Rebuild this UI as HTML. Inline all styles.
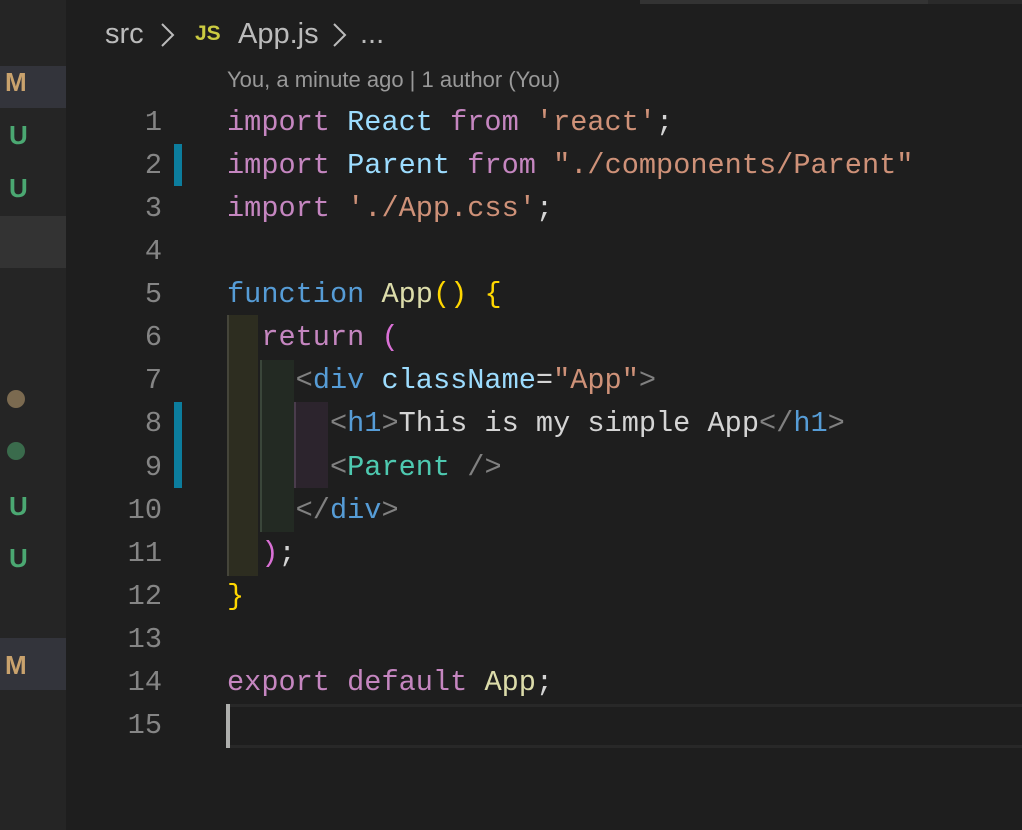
<!DOCTYPE html>
<html><head><meta charset="utf-8"><style>
html,body{margin:0;padding:0;width:1022px;height:830px;overflow:hidden;background:#1e1e1e;}
.abs{position:absolute}
#side{left:0;top:0;width:66px;height:830px;background:#252525}
.row{position:absolute;left:0;width:66px}
.st{position:absolute;font-family:"Liberation Sans",sans-serif;font-weight:bold;font-size:26px;left:7px}
.code{position:absolute;left:227px;font-family:"Liberation Mono",monospace;font-size:28.6px;white-space:pre;color:#d4d4d4;line-height:43px}
.ln{position:absolute;left:90px;width:72px;text-align:right;font-family:"Liberation Mono",monospace;font-size:28.6px;color:#858585;line-height:43px}
.k{color:#c586c0}.v{color:#9cdcfe}.s{color:#ce9178}.f{color:#569cd6}.fn{color:#dcdcaa}.b{color:#ffd700}.p{color:#da70d6}.t{color:#808080}.tn{color:#569cd6}.c{color:#4ec9b0}
.bc{position:absolute;font-family:'Liberation Sans',sans-serif;font-size:29px;color:#bbbbbb;white-space:pre;top:18px}
</style></head><body>
<div id="side" class="abs">
 <div class="row" style="top:66px;height:42px;background:#33343b"></div>
 <div class="row" style="top:216px;height:52px;background:#333333"></div>
 <div class="row" style="top:638px;height:52px;background:#33343b"></div>
 <div class="st" style="top:67px;color:#c9a26d;left:5px">M</div>
 <div class="st" style="top:120px;color:#4ba872;left:9px">U</div>
 <div class="st" style="top:173px;color:#4ba872;left:9px">U</div>
 <div class="abs" style="left:7px;top:390px;width:18px;height:18px;border-radius:50%;background:#7b6a50"></div>
 <div class="abs" style="left:7px;top:442px;width:18px;height:18px;border-radius:50%;background:#3a6b4c"></div>
 <div class="st" style="top:491px;color:#4ba872;left:9px">U</div>
 <div class="st" style="top:543px;color:#4ba872;left:9px">U</div>
 <div class="st" style="top:650px;color:#c9a26d;left:5px">M</div>
</div>
<div class="abs" style="left:640px;top:0;width:288px;height:4px;background:#333"></div>
<div class="abs" style="left:928px;top:0;width:94px;height:4px;background:#2a2a2a"></div>
<div class="bc" style="left:105px">src</div>
<svg class="abs" style="left:158px;top:22px" width="18" height="26" viewBox="0 0 18 26"><path d="M4 2 L15 13 L4 24" stroke="#bbbbbb" stroke-width="2" fill="none"/></svg>
<div class="abs" style="left:195px;top:22px;font-family:'Liberation Sans',sans-serif;font-weight:bold;font-size:21px;color:#cbcb41">JS</div>
<div class="bc" style="left:238px">App.js</div>
<svg class="abs" style="left:330px;top:22px" width="18" height="26" viewBox="0 0 18 26"><path d="M4 2 L15 13 L4 24" stroke="#bbbbbb" stroke-width="2" fill="none"/></svg>
<div class="bc" style="left:360px">...</div>
<div class="abs" style="left:227px;top:67px;font-family:'Liberation Sans',sans-serif;font-size:22px;color:#999999;white-space:pre">You, a minute ago | 1 author (You)</div>
<div class="abs" style="left:227px;top:315px;width:31px;height:261px;background:#2d2d20;border-left:2px solid #45453a;box-sizing:border-box"></div>
<div class="abs" style="left:260px;top:360px;width:34px;height:172px;background:#232a23;border-left:2px solid #3a463a;box-sizing:border-box"></div>
<div class="abs" style="left:294px;top:402px;width:34px;height:86px;background:#2c242d;border-left:2px solid #4a3c4c;box-sizing:border-box"></div>
<div class="abs" style="left:174px;top:144px;width:8px;height:42px;background:#0c7d9d"></div>
<div class="abs" style="left:174px;top:402px;width:8px;height:86px;background:#0c7d9d"></div>
<div class="abs" style="left:227px;top:704px;width:795px;height:44px;border-top:3px solid #282828;border-bottom:3px solid #282828;box-sizing:border-box"></div>
<div class="abs" style="left:226px;top:704px;width:4px;height:44px;background:#aeafad"></div>
<div class="ln" style="top:101px">1</div>
<div class="ln" style="top:144px">2</div>
<div class="ln" style="top:187px">3</div>
<div class="ln" style="top:230px">4</div>
<div class="ln" style="top:273px">5</div>
<div class="ln" style="top:316px">6</div>
<div class="ln" style="top:359px">7</div>
<div class="ln" style="top:402px">8</div>
<div class="ln" style="top:446px">9</div>
<div class="ln" style="top:489px">10</div>
<div class="ln" style="top:532px">11</div>
<div class="ln" style="top:575px">12</div>
<div class="ln" style="top:618px">13</div>
<div class="ln" style="top:661px">14</div>
<div class="ln" style="top:704px">15</div>
<div class="code" style="top:101px"><span class="k">import</span> <span class="v">React</span> <span class="k">from</span> <span class="s">'react'</span>;</div>
<div class="code" style="top:144px"><span class="k">import</span> <span class="v">Parent</span> <span class="k">from</span> <span class="s">"./components/Parent"</span></div>
<div class="code" style="top:187px"><span class="k">import</span> <span class="s">'./App.css'</span>;</div>
<div class="code" style="top:273px"><span class="f">function</span> <span class="fn">App</span><span class="b">()</span> <span class="b">{</span></div>
<div class="code" style="top:316px">  <span class="k">return</span> <span class="p">(</span></div>
<div class="code" style="top:359px">    <span class="t">&lt;</span><span class="tn">div</span> <span class="v">className</span>=<span class="s">"App"</span><span class="t">&gt;</span></div>
<div class="code" style="top:402px">      <span class="t">&lt;</span><span class="tn">h1</span><span class="t">&gt;</span>This is my simple App<span class="t">&lt;/</span><span class="tn">h1</span><span class="t">&gt;</span></div>
<div class="code" style="top:446px">      <span class="t">&lt;</span><span class="c">Parent</span> <span class="t">/&gt;</span></div>
<div class="code" style="top:489px">    <span class="t">&lt;/</span><span class="tn">div</span><span class="t">&gt;</span></div>
<div class="code" style="top:532px">  <span class="p">)</span>;</div>
<div class="code" style="top:575px"><span class="b">}</span></div>
<div class="code" style="top:661px"><span class="k">export</span> <span class="k">default</span> <span class="fn">App</span>;</div>
</body></html>
